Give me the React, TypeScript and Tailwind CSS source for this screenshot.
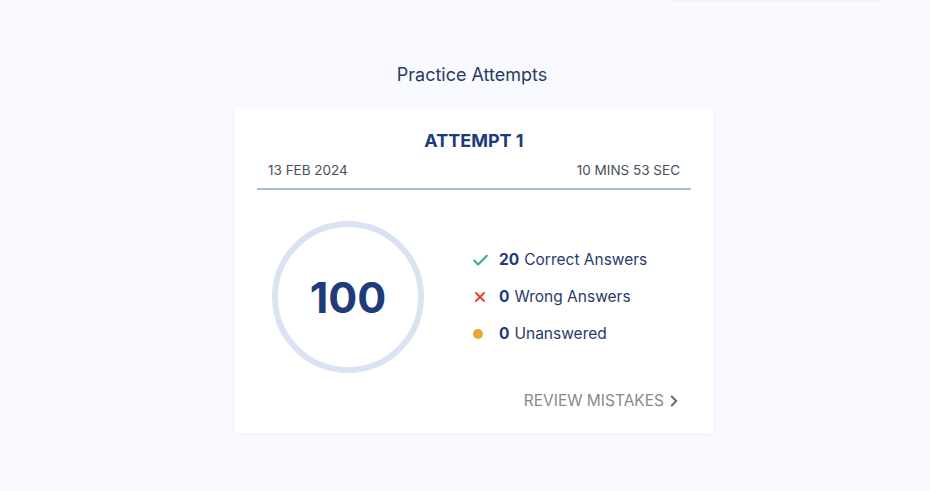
import { Check, X, ChevronRight } from 'lucide-react'

type Stat = {
  count: number
  label: string
  kind: 'correct' | 'wrong' | 'skipped'
}

const stats: Stat[] = [
  { count: 20, label: 'Correct Answers', kind: 'correct' },
  { count: 0, label: 'Wrong Answers', kind: 'wrong' },
  { count: 0, label: 'Unanswered', kind: 'skipped' }
]

const StatIcon = ({ kind }: { kind: Stat['kind'] }) => {
  if (kind === 'correct')
    return <Check className="h-[19px] w-[19px] text-[#3fae6a]" strokeWidth={2.6} />
  if (kind === 'wrong')
    return <X className="ml-[1px] h-[16px] w-[16px] text-[#e0442f]" strokeWidth={3} />
  return <span className="ml-[2px] block h-[10px] w-[10px] rounded-full bg-[#e8a92e]" />
}

const App = () => {
  return (
    <div
      className="min-h-screen w-full bg-[#f8faff] text-[#2b3a67]"
      style={{ fontFamily: 'Inter, "Noto Sans", sans-serif' }}
    >
      <div className="flex justify-end pr-[50px]">
        <div className="h-[2px] w-[210px] bg-[#f1f3f9]" />
      </div>
      <div className="flex flex-col items-center pl-[18px] pt-[61px]">
        <h2 className="pr-[4px] text-[18px] leading-6 text-[#2b3a67]">Practice Attempts</h2>
        <div className="mt-[20px] w-[478px] rounded-[4px] bg-white px-[22px] pb-[22px] pt-[24px] shadow-[0_1px_4px_rgba(30,50,120,0.05)]">
          <div className="text-center text-[18px] font-bold leading-5 text-[#1f3b7a]">
            ATTEMPT 1
          </div>
          <div className="mt-[9px] flex justify-between border-b-2 border-[#aab8df] px-[11px] pb-[8px] text-[13.5px] leading-5 text-[#4a4f5c]">
            <span>13 FEB 2024</span>
            <span>10 MINS 53 SEC</span>
          </div>
          <div className="mt-[31px] flex items-center pl-[15px]">
            <div className="flex h-[152px] w-[152px] items-center justify-center rounded-full border-[6px] border-[#dbe3f3]">
              <span className="text-[43px] font-bold leading-none text-[#1f3b7a]">100</span>
            </div>
            <div className="ml-[47px] flex flex-col gap-[15px]">
              {stats.map(s => (
                <div key={s.label} className="flex items-center text-[15.5px] leading-[22px]">
                  <span className="flex w-[28px] items-center">
                    <StatIcon kind={s.kind} />
                  </span>
                  <span className="font-bold text-[#1f3b7a]">{s.count}</span>
                  <span className="ml-[5px] text-[#2b3a67]">{s.label}</span>
                </div>
              ))}
            </div>
          </div>
          <div className="mt-[18px] flex justify-end pr-[8px]">
            <button className="flex items-center text-[15.5px] leading-5 text-[#8a8a8a]">
              REVIEW MISTAKES
              <ChevronRight className="ml-[1px] h-[18px] w-[18px] text-[#6b6b6b]" strokeWidth={2.8} />
            </button>
          </div>
        </div>
      </div>
    </div>
  )
}

export default App
